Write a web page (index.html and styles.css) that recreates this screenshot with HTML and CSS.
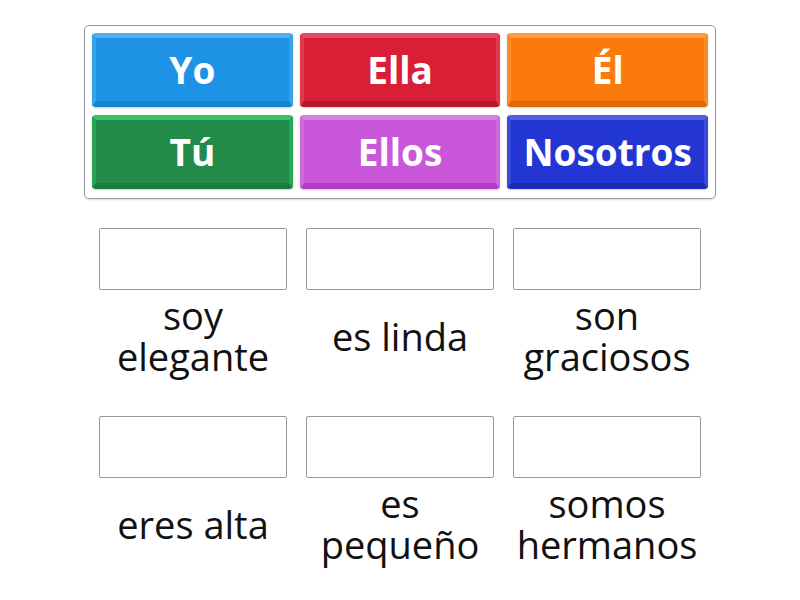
FILE: index.html
```html
<!DOCTYPE html>
<html lang="es">
<head>
<meta charset="utf-8">
<link rel="stylesheet" href="styles.css">
</head>
<body>
<div class="bank">
  <div class="tile blue">Yo</div>
  <div class="tile red">Ella</div>
  <div class="tile orange">Él</div>
  <div class="tile green">Tú</div>
  <div class="tile purple">Ellos</div>
  <div class="tile navy">Nosotros</div>
</div>
<div class="targets">
  <div class="cell"><div class="drop"></div><div class="label">soy<br>elegante</div></div>
  <div class="cell"><div class="drop"></div><div class="label">es linda</div></div>
  <div class="cell"><div class="drop"></div><div class="label">son<br>graciosos</div></div>
  <div class="cell"><div class="drop"></div><div class="label">eres alta</div></div>
  <div class="cell"><div class="drop"></div><div class="label">es<br>pequeño</div></div>
  <div class="cell"><div class="drop"></div><div class="label">somos<br>hermanos</div></div>
</div>
</body>
</html>
```

FILE: styles.css
```css
html, body {
  margin: 0;
  padding: 0;
  background: #ffffff;
  font-family: "Open Sans", "Noto Sans", sans-serif;
}
body {
  padding-top: 25px;
}
.bank {
  width: 632px;
  box-sizing: border-box;
  margin: 0 auto;
  border: 1px solid #9a9a9a;
  border-radius: 5px;
  padding: 7px 7px 9px 7px;
  display: grid;
  grid-template-columns: repeat(3, 1fr);
  column-gap: 7px;
  row-gap: 8px;
  box-shadow: 0 1px 2px rgba(0,0,0,0.15);
}
.tile {
  height: 74px;
  box-sizing: border-box;
  border-radius: 4px;
  border-style: solid;
  border-width: 5px 4px 6px 4px;
  display: flex;
  align-items: center;
  justify-content: center;
  color: #ffffff;
  font-weight: 700;
  font-size: 37px;
  box-shadow: 0 1px 2px rgba(0,0,0,0.2);
}
.blue {
  background: #1e93e6;
  border-color: #52aef0 #3aa2ec #1683cf #3aa2ec;
}
.red {
  background: #d91f36;
  border-color: #e24d60 #dd3a4d #b8172b #dd3a4d;
}
.orange {
  background: #fa7b0c;
  border-color: #fd9a43 #fb8c2a #dd6a06 #fb8c2a;
}
.green {
  background: #228b4a;
  border-color: #35c568 #2aa557 #1b7a3e #2aa557;
}
.purple {
  background: #c957d9;
  border-color: #d77fe3 #cf6ade #b43cc8 #cf6ade;
}
.navy {
  background: #2336d3;
  border-color: #4f60e0 #3a4cdb #1c2bb5 #3a4cdb;
}
.targets {
  width: 621px;
  margin: 29px auto 0;
  display: grid;
  grid-template-columns: repeat(3, 207px);
  row-gap: 30px;
}
.cell {
  display: flex;
  flex-direction: column;
  align-items: center;
}
.drop {
  width: 188px;
  height: 62px;
  box-sizing: border-box;
  border: 1px solid #999999;
  border-radius: 2px;
  background: #ffffff;
}
.label {
  height: 92px;
  margin-bottom: 4px;
  display: flex;
  align-items: center;
  justify-content: center;
  text-align: center;
  font-size: 38px;
  line-height: 41px;
  color: #111111;
  white-space: nowrap;
}
```
